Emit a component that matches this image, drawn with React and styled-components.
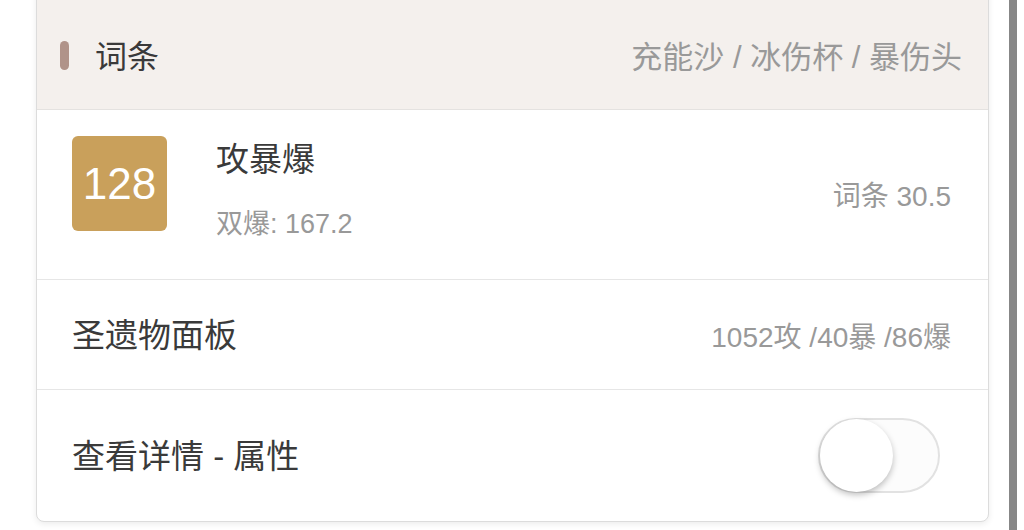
import React, { useState } from 'react';
import styled, { createGlobalStyle } from 'styled-components';

const GlobalStyle = createGlobalStyle`
  html, body {
    margin: 0;
    padding: 0;
    background: #fff;
    overflow: hidden;
  }
  body {
    font-family: "Liberation Sans", "Noto Sans CJK SC", sans-serif;
  }
`;

const Page = styled.div`
  display: flex;
  height: 530px;
`;

const Main = styled.div`
  width: 1009px;
  padding-left: 36px;
  box-sizing: border-box;
`;

const ScrollBar = styled.div`
  width: 8px;
  height: 100%;
  background: #878787;
`;

const Card = styled.div`
  width: 953px;
  margin-top: -10px;
  box-sizing: border-box;
  border: 1px solid #dcdcdc;
  border-radius: 8px;
  background: #fff;
  box-shadow: 0 2px 6px rgba(0, 0, 0, 0.08);
  overflow: hidden;
`;

const Header = styled.div`
  height: 119px;
  padding: 8px 26px 0 23px;
  box-sizing: border-box;
  display: flex;
  align-items: center;
  background: #f4f0ed;
  border-bottom: 1px solid #e4e2e0;
`;

const Accent = styled.span`
  width: 9px;
  height: 29px;
  border-radius: 5px;
  background: #b09389;
  margin-right: 26px;
  margin-top: 2px;
`;

const Title = styled.span`
  font-size: 32px;
  color: #3a3a3a;
  flex: 1;
`;

const Hint = styled.span`
  font-size: 31px;
  color: #999;
`;

const Row = styled.div`
  display: flex;
  align-items: ${p => (p.top ? 'flex-start' : 'center')};
  height: ${p => p.h}px;
  padding: ${p => (p.top ? '26px 37px 0 35px' : '0 37px 0 35px')};
  box-sizing: border-box;
  border-bottom: ${p => (p.last ? 'none' : '1px solid #e6e6e6')};
`;

const Badge = styled.div`
  width: 95px;
  height: 95px;
  border-radius: 6px;
  background: #c9a05b;
  color: #fff;
  font-size: 44px;
  display: flex;
  align-items: center;
  justify-content: center;
  margin-right: 49px;
`;

const Info = styled.div`
  display: flex;
  flex-direction: column;
  flex: 1;
  padding-top: 4px;
`;

const Name = styled.div`
  font-size: 33px;
  color: #3a3a3a;
  line-height: 40px;
`;

const Sub = styled.div`
  font-size: 27px;
  color: #999;
  line-height: 34px;
  margin-top: 27px;
`;

const Label = styled.span`
  flex: 1;
  font-size: 33px;
  color: #3a3a3a;
  margin-top: -3px;
`;

const Value = styled.span`
  font-size: 28px;
  color: #999;
  margin-top: ${p => p.mt || 0}px;
`;

const Track = styled.button`
  width: 122px;
  height: 75px;
  border-radius: 38px;
  border: 2px solid #e2e2e2;
  background: ${p => (p.on ? '#c9a05b' : '#fcfcfc')};
  padding: 0;
  display: flex;
  justify-content: ${p => (p.on ? 'flex-end' : 'flex-start')};
  align-items: center;
  cursor: pointer;
  margin-right: 11px;
`;

const Knob = styled.span`
  width: 73px;
  height: 73px;
  border-radius: 50%;
  background: #fff;
  box-shadow: 0 3px 6px rgba(0, 0, 0, 0.25);
`;

export default function App() {
  const [on, setOn] = useState(false);
  return (
    <>
      <GlobalStyle />
      <Page>
        <Main>
          <Card>
            <Header>
              <Accent />
              <Title>词条</Title>
              <Hint>充能沙 / 冰伤杯 / 暴伤头</Hint>
            </Header>
            <Row h={170} top>
              <Badge>128</Badge>
              <Info>
                <Name>攻暴爆</Name>
                <Sub>双爆: 167.2</Sub>
              </Info>
              <Value mt={38}>词条 30.5</Value>
            </Row>
            <Row h={110}>
              <Label>圣遗物面板</Label>
              <Value>1052攻 /40暴 /86爆</Value>
            </Row>
            <Row h={131} last>
              <Label>查看详情 - 属性</Label>
              <Track on={on} onClick={() => setOn(!on)}>
                <Knob />
              </Track>
            </Row>
          </Card>
        </Main>
        <ScrollBar />
      </Page>
    </>
  );
}
